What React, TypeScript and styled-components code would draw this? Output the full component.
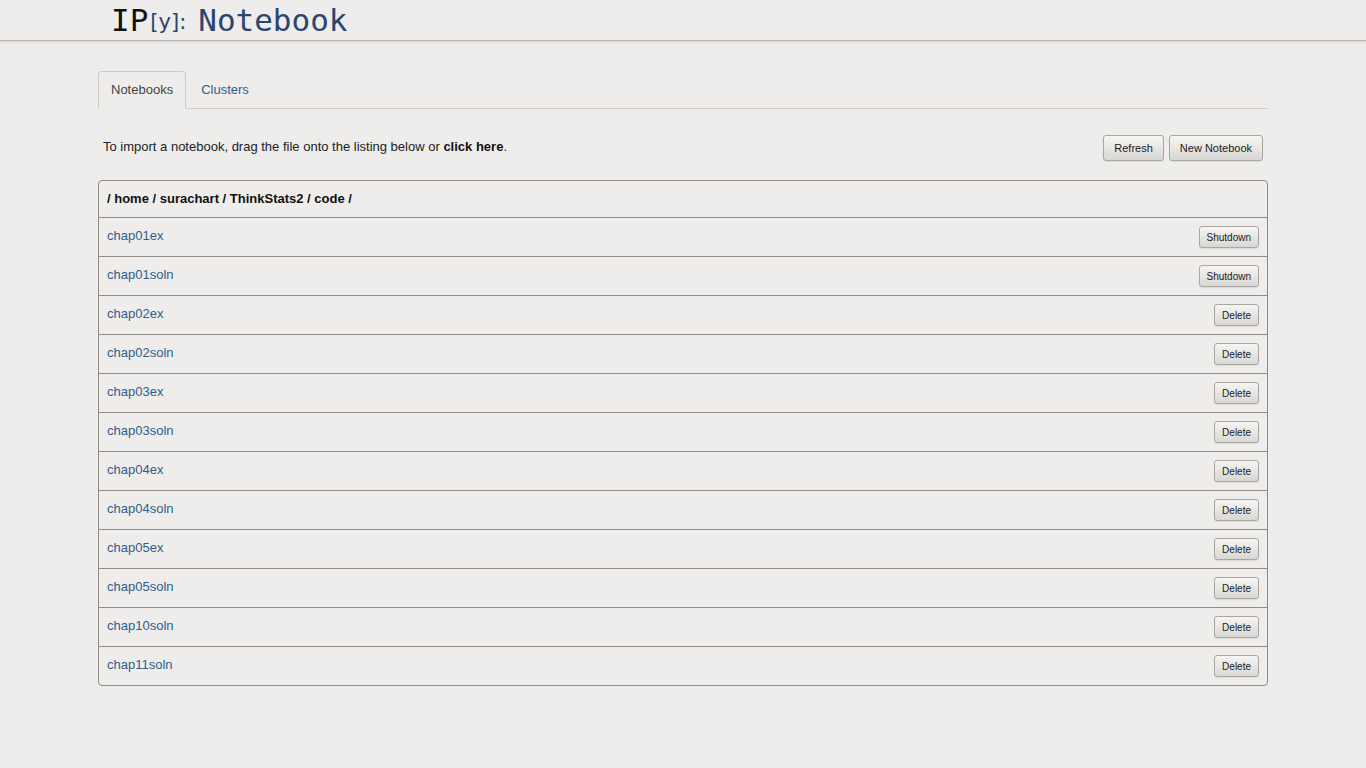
import styled, { createGlobalStyle } from "styled-components";

const GlobalStyle = createGlobalStyle`
  html, body {
    margin: 0;
    padding: 0;
    background: #eeedeb;
    font-family: "Liberation Sans", Arial, sans-serif;
    font-size: 13px;
    color: #222;
  }
`;

const Header = styled.div`
  height: 40px;
  border-bottom: 1px solid #b8b5b0;
  box-shadow: 0 1px 3px rgba(0, 0, 0, 0.12);
  background: #eeedeb;
`;
const HeaderInner = styled.div`
  width: 1170px;
  margin: 0 auto;
  padding-left: 13px;
  box-sizing: border-box;
  display: flex;
  align-items: baseline;
  height: 40px;
  font-family: "DejaVu Sans Mono", monospace;
`;
const LogoIP = styled.span`
  font-size: 31px;
  line-height: 40px;
  color: #111;
`;
const LogoY = styled.span`
  font-family: "DejaVu Sans", sans-serif;
  font-size: 21px;
  color: #2a4670;
  margin-left: 2px;
  position: relative;
  top: -2px;
`;
const LogoTitle = styled.span`
  font-size: 31px;
  color: #2a4670;
  margin-left: 12px;
`;

const Container = styled.div`
  width: 1170px;
  margin: 0 auto;
  padding-top: 30px;
`;

const Tabs = styled.div`
  display: flex;
  border-bottom: 1px solid #cfccc8;
  height: 37px;
`;
const Tab = styled.div<{ $active?: boolean }>`
  padding: 8px 12px;
  line-height: 20px;
  margin-bottom: -1px;
  border: 1px solid ${(p) => (p.$active ? "#cfccc8" : "transparent")};
  border-bottom-color: ${(p) => (p.$active ? "#eeedeb" : "transparent")};
  border-radius: 4px 4px 0 0;
  color: ${(p) => (p.$active ? "#444" : "#2f5e8c")};
  margin-right: 2px;
`;

const Toolbar = styled.div`
  display: flex;
  align-items: center;
  justify-content: space-between;
  margin-top: 25px;
  padding: 0 5px 0 5px;
  height: 27px;
  & > span {
    padding-bottom: 3px;
  }
  & b {
    color: #111;
  }
`;
const Btns = styled.div`
  display: flex;
  gap: 5px;
`;
const Button = styled.button<{ $small?: boolean }>`
  font-family: "Liberation Sans", Arial, sans-serif;
  font-size: ${(p) => (p.$small ? "10px" : "11px")};
  color: #222;
  height: ${(p) => (p.$small ? "22px" : "26px")};
  padding: ${(p) => (p.$small ? "0 7px" : "0 10px")};
  border: 1px solid #aaa7a2;
  border-radius: 3px;
  background: linear-gradient(#f6f5f3, #d9d7d3);
  box-shadow: 0 1px 1px rgba(0, 0, 0, 0.08);
`;

const List = styled.div`
  margin-top: 19px;
  border: 1px solid #8f8c88;
  border-radius: 4px;
`;
const Crumbs = styled.div`
  height: 36px;
  line-height: 35px;
  padding: 0 8px;
  font-weight: bold;
  color: #111;
`;
const Row = styled.div`
  display: flex;
  align-items: center;
  justify-content: space-between;
  height: 38px;
  border-top: 1px solid #8f8c88;
  padding: 0 8px;
`;
const Name = styled.span`
  color: #2f5e8c;
  margin-top: -4px;
`;

const rows: [string, boolean][] = [
  ["chap01ex", true],
  ["chap01soln", true],
  ["chap02ex", false],
  ["chap02soln", false],
  ["chap03ex", false],
  ["chap03soln", false],
  ["chap04ex", false],
  ["chap04soln", false],
  ["chap05ex", false],
  ["chap05soln", false],
  ["chap10soln", false],
  ["chap11soln", false],
];

export default function App() {
  return (
    <>
      <GlobalStyle />
      <Header>
        <HeaderInner>
          <LogoIP>IP</LogoIP>
          <LogoY>[y]:</LogoY>
          <LogoTitle>Notebook</LogoTitle>
        </HeaderInner>
      </Header>
      <Container>
        <Tabs>
          <Tab $active>Notebooks</Tab>
          <Tab>Clusters</Tab>
        </Tabs>
        <Toolbar>
          <span>
            To import a notebook, drag the file onto the listing below or <b>click here</b>.
          </span>
          <Btns>
            <Button>Refresh</Button>
            <Button>New Notebook</Button>
          </Btns>
        </Toolbar>
        <List>
          <Crumbs>/ home / surachart / ThinkStats2 / code /</Crumbs>
          {rows.map(([name, running]) => (
            <Row key={name}>
              <Name>{name}</Name>
              <Button $small>{running ? "Shutdown" : "Delete"}</Button>
            </Row>
          ))}
        </List>
      </Container>
    </>
  );
}
